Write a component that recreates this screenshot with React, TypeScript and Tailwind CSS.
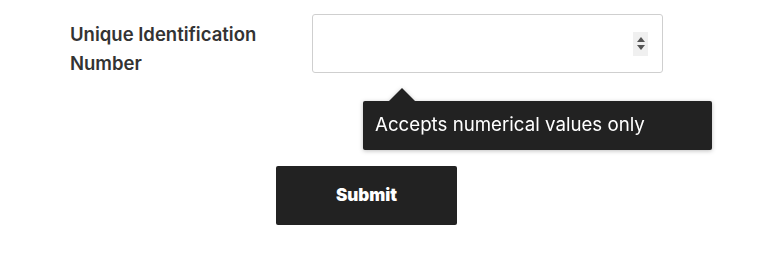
import React from "react";

function SpinButton() {
  return (
    <span className="flex h-[24px] w-[15px] flex-col items-center justify-center gap-[3px] bg-[#f0f0f0]" aria-hidden="true">
      <svg viewBox="0 0 8 5" className="h-[5px] w-[8px]">
        <path d="M4 0L8 5H0Z" fill="#555" />
      </svg>
      <svg viewBox="0 0 8 5" className="h-[5px] w-[8px]">
        <path d="M0 0H8L4 5Z" fill="#555" />
      </svg>
    </span>
  );
}

export default function App() {
  return (
    <div className="h-[270px] w-[768px] bg-white font-['Inter','Liberation_Sans',sans-serif]">
      <div className="flex pl-[70px] pt-[14px]">
        <label
          htmlFor="uid"
          className="h-[64px] w-[242px] pt-[6px] text-[18.5px] font-semibold leading-[29px] text-[#333]"
        >
          Unique Identification
          <br />
          Number
        </label>
        <div className="relative">
          <div className="flex h-[59px] w-[351px] items-center justify-end rounded-[3px] border border-[#cfcfcf] bg-white pr-[14px]">
            <input id="uid" type="text" className="min-w-0 flex-1 bg-transparent px-3 outline-none" />
            <SpinButton />
          </div>
          <div className="absolute left-[51px] top-[74px] drop-shadow-[0_1px_2px_rgba(0,0,0,0.25)]">
            <svg viewBox="0 0 26 13" className="ml-[26px] block h-[13px] w-[26px]" aria-hidden="true">
              <path d="M0 13L13 0L26 13Z" fill="#222" />
            </svg>
            <div className="flex h-[49px] w-[349px] items-center rounded-[2px] bg-[#222] px-[12px] text-[18.7px] text-white">
              Accepts numerical values only
            </div>
          </div>
        </div>
      </div>
      <div className="pl-[276px] pt-[88px]">
        <button
          type="button"
          className="h-[59px] w-[181px] rounded-[2px] bg-[#222] text-[17px] font-black text-white"
        >
          Submit
        </button>
      </div>
    </div>
  );
}
